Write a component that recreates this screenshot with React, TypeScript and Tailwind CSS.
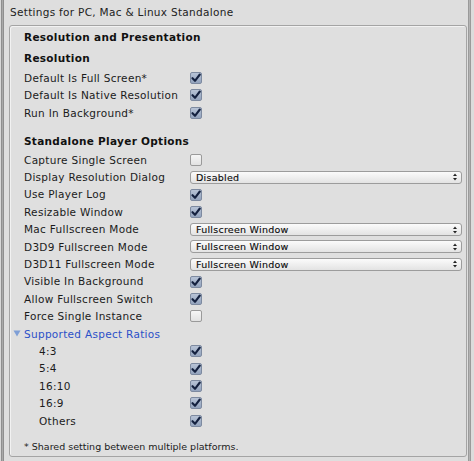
import React from "react";

const font = { fontFamily: '"DejaVu Sans", Verdana, sans-serif' };

function Check({ on }: { on: boolean }) {
  if (!on)
    return (
      <div className="w-[12px] h-[12px] rounded-[2px] border border-[#9a9a9a] bg-gradient-to-b from-[#f6f6f6] to-[#e2e2e2]" />
    );
  return (
    <div className="w-[12px] h-[12px] rounded-[2px] border border-[#7d8aa0] bg-gradient-to-b from-[#b7c3d6] to-[#93a3bd] flex items-center justify-center">
      <svg width="10" height="10" viewBox="0 0 10 10">
        <path d="M1.5 5.2 L4 7.8 L8.8 1.5" fill="none" stroke="#14213f" strokeWidth="2.1" strokeLinecap="round" strokeLinejoin="round" />
      </svg>
    </div>
  );
}

function Popup({ value }: { value: string }) {
  return (
    <div className="flex-1 h-[13px] rounded-[3px] border border-[#9c9c9c] bg-gradient-to-b from-[#fbfbfb] to-[#e3e3e3] flex items-center pl-[5px] pr-[4px]">
      <span className="flex-1 text-[9.5px] leading-none text-[#0a0a0a] tracking-[0.25px] [-webkit-text-stroke:0.12px_#0a0a0a]">{value}</span>
      <svg width="4" height="8" viewBox="0 0 4 8">
        <path d="M0 3 L2 0.5 L4 3 Z" fill="#222" />
        <path d="M0 5 L2 7.5 L4 5 Z" fill="#222" />
      </svg>
    </div>
  );
}

type Row = { label: string; check?: boolean; popup?: string; indent?: boolean };

function SettingRow({ r }: { r: Row }) {
  return (
    <div className="h-[17.4px] flex items-center">
      <div className={`w-[166px] shrink-0 text-[10.5px] text-[#1b1b1b] leading-none tracking-[0.3px] ${r.indent ? "pl-[15px]" : ""}`}>
        {r.label}
      </div>
      {r.popup !== undefined ? <Popup value={r.popup} /> : <Check on={!!r.check} />}
    </div>
  );
}

export default function App() {
  const res: Row[] = [
    { label: "Default Is Full Screen*", check: true },
    { label: "Default Is Native Resolution", check: true },
    { label: "Run In Background*", check: true },
  ];
  const sa: Row[] = [
    { label: "Capture Single Screen", check: false },
    { label: "Display Resolution Dialog", popup: "Disabled" },
    { label: "Use Player Log", check: true },
    { label: "Resizable Window", check: true },
    { label: "Mac Fullscreen Mode", popup: "Fullscreen Window" },
    { label: "D3D9 Fullscreen Mode", popup: "Fullscreen Window" },
    { label: "D3D11 Fullscreen Mode", popup: "Fullscreen Window" },
    { label: "Visible In Background", check: true },
    { label: "Allow Fullscreen Switch", check: true },
    { label: "Force Single Instance", check: false },
  ];
  const ar: Row[] = [
    { label: "4:3", check: true, indent: true },
    { label: "5:4", check: true, indent: true },
    { label: "16:10", check: true, indent: true },
    { label: "16:9", check: true, indent: true },
    { label: "Others", check: true, indent: true },
  ];
  return (
    <div style={font} className="w-[474px] h-[461px] bg-[#dedede] flex overflow-hidden">
      <div className="w-[1px] bg-[#d8d8d8]" />
      <div className="w-[3px] bg-[#a9a9a9] border-x border-[#8f8f8f]" />
      <div className="flex-1 flex flex-col">
        <div className="h-[25px] pl-[6px] flex items-center text-[10.5px] text-[#222] leading-none tracking-[0.3px]">
          Settings for PC, Mac &amp; Linux Standalone
        </div>
        <div className="ml-[5px] mr-[1px] h-[432px] rounded-[3px] border border-[#a4a4a4] bg-[#dfdfdf] shadow-[inset_1px_1px_0_#f2f2f2] pl-[14px] pr-[4px] flex flex-col">
          <div className="h-[22px] pt-[1px] flex items-center font-bold text-[10.5px] text-[#111] leading-none tracking-[0.3px]">
            Resolution and Presentation
          </div>
          <div className="h-[21.3px] flex items-center font-bold text-[10.5px] text-[#111] leading-none tracking-[0.3px]">
            Resolution
          </div>
          {res.map((r) => (
            <SettingRow key={r.label} r={r} />
          ))}
          <div className="h-[29.8px] pt-[10px] flex items-center font-bold text-[10.5px] text-[#111] leading-none tracking-[0.3px]">
            Standalone Player Options
          </div>
          {sa.map((r) => (
            <SettingRow key={r.label} r={r} />
          ))}
          <div className="h-[17.4px] flex items-center -ml-[11px] text-[10.5px] text-[#2b50c8] leading-none tracking-[0.3px]">
            <svg width="8" height="7" viewBox="0 0 8 7" className="mr-[3px]">
              <path d="M0.5 0.5 L7.5 0.5 L4 6.5 Z" fill="#7f9fd6" />
            </svg>
            Supported Aspect Ratios
          </div>
          {ar.map((r) => (
            <SettingRow key={r.label} r={r} />
          ))}
          <div className="h-[24px] pt-[10px] flex items-center text-[9.5px] text-[#1b1b1b] leading-none">
            * Shared setting between multiple platforms.
          </div>
        </div>
      </div>
      <div className="w-[3px] bg-[#b3b3b3] border-x border-[#9a9a9a]" />
      <div className="w-[3px] bg-[#dcdcdc]" />
    </div>
  );
}
